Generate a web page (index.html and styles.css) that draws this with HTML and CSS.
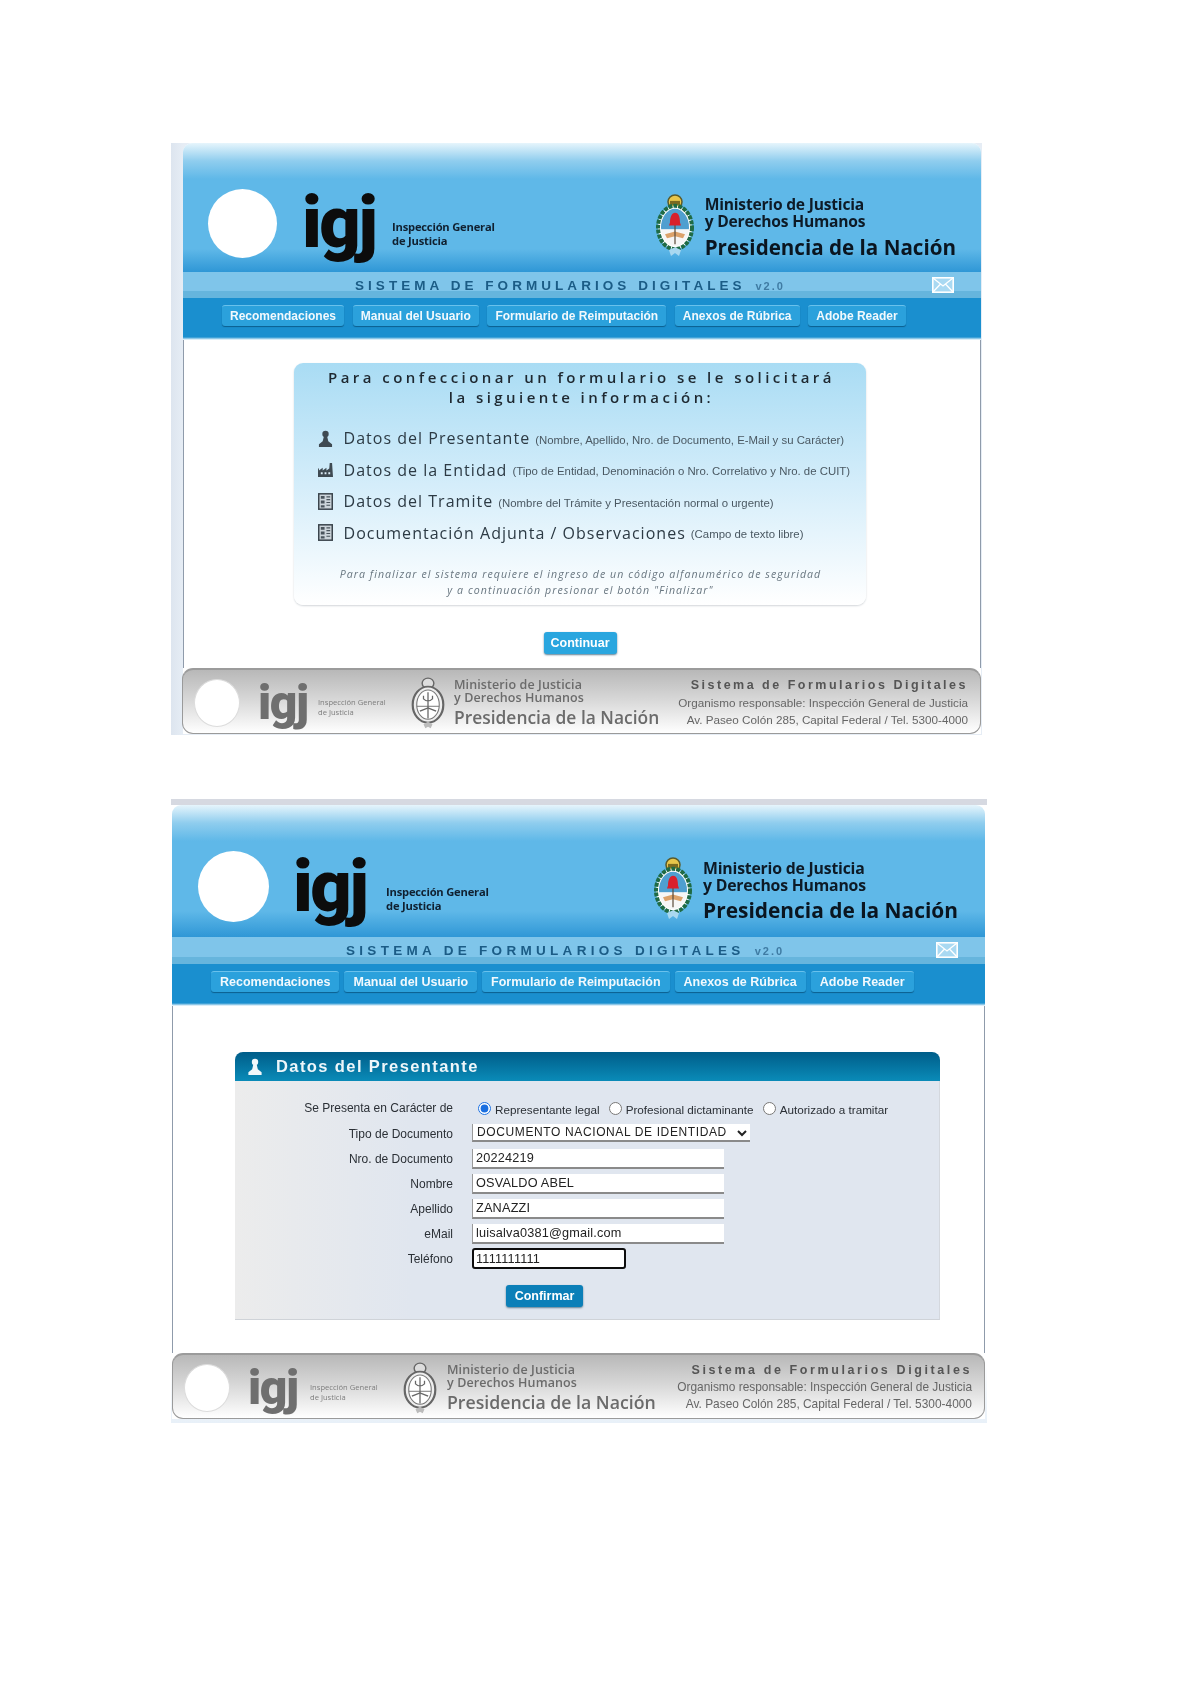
FILE: index.html
```html
<!DOCTYPE html>
<html lang="es">
<head>
<meta charset="utf-8">
<title>Sistema de Formularios Digitales</title>
<link rel="stylesheet" href="styles.css">
</head>
<body>
<svg class="defs" width="0" height="0" aria-hidden="true">
  <defs>
    <clipPath id="shield"><ellipse cx="20" cy="35" rx="14" ry="19"/></clipPath>
    <symbol id="emblem" viewBox="0 0 40 66" preserveAspectRatio="none">
      <circle cx="20" cy="9" r="7" fill="#e8c64a" stroke="#5a5a2a" stroke-width="1.5"/>
      <rect x="15" y="8" width="10" height="4" fill="#7a6a20"/>
      <ellipse cx="20" cy="35" rx="17" ry="22" fill="#fff" stroke="#1f6b45" stroke-width="4" stroke-dasharray="4 1"/>
      <g clip-path="url(#shield)">
        <rect x="4" y="14" width="32" height="23" fill="#4f9fd0"/>
        <rect x="4" y="37" width="32" height="20" fill="#f6f6f6"/>
        <path d="M10 42 L20 39 L30 42 L28 46 L20 44 L12 46Z" fill="#dca26a"/>
        <path d="M20 26 V52" stroke="#5a4a3a" stroke-width="1.2"/>
      </g>
      <path d="M15 30 C15 24 17 20 20 20 C24 20 25 25 25 30 L26 33 H14Z" fill="#d8202c"/>
      <path d="M14 58 L20 55 L26 58 L24 64 L20 61 L16 64Z" fill="#a9d8f0"/>
    </symbol>
    <symbol id="emblem-gray" viewBox="0 0 40 66" preserveAspectRatio="none">
      <circle cx="20" cy="9" r="6.5" fill="#ddd" stroke="#666" stroke-width="1.6"/>
      <ellipse cx="20" cy="35" rx="17" ry="22" fill="#eee" stroke="#666" stroke-width="2.4"/>
      <ellipse cx="20" cy="35" rx="12.5" ry="18" fill="#fff" stroke="#777" stroke-width="1.2"/>
      <path d="M7.5 37 H32.5" stroke="#777" stroke-width="1.2"/>
      <path d="M20 20 V52 M15 24 V28 Q20 33 25 28 V24" fill="none" stroke="#666" stroke-width="1.4"/>
      <path d="M11 43 L20 39 L29 43" fill="none" stroke="#666" stroke-width="1.6"/>
      <path d="M15 59 L20 56 L25 59 L23 64 L20 62 L17 64Z" fill="#bbb"/>
    </symbol>
    <symbol id="person" viewBox="0 0 16 18">
      <circle cx="8" cy="4.2" r="3.4"/>
      <path d="M6.2 7 H9.8 L11 12 L15 15 V18 H1 V15 L5 12Z"/>
    </symbol>
    <symbol id="factory" viewBox="0 0 16 16">
      <path d="M0 16 V7 L1 7 V9 L5 6 V9 L9 6 V9 L12 7 L12.5 1 H15 L16 16Z"/>
      <path d="M3 11 h2 v2 h-2z M7 11 h2 v2 h-2z M11 11 h2 v2 h-2z" fill="#dcecf6"/>
    </symbol>
    <symbol id="doc" viewBox="0 0 16 18">
      <rect x=".8" y=".8" width="14.4" height="16.4" fill="#ccd4da" stroke="#3a444c" stroke-width="1.6"/>
      <path d="M3 3 H7 V6 H3Z M3 8 H7 V11 H3Z M3 13 H7 V15.5 H3Z" fill="#4a545c"/>
      <path d="M9 4 H13 M9 7 H13 M9 10 H13 M9 13 H13" stroke="#4a545c" stroke-width="1.2"/>
    </symbol>
    <symbol id="mail" viewBox="0 0 22 16">
      <rect x=".8" y=".8" width="20.4" height="14.4" fill="#a9d9f2" stroke="#fff" stroke-width="1.6"/>
      <path d="M1 1 L11 9 L21 1 M1 15 L8.5 7 M21 15 L13.5 7" fill="none" stroke="#fff" stroke-width="1.3"/>
    </symbol>
  </defs>
</svg>

<section class="panel panel-first">
  <div class="frame">
    <header class="brand">
      <div class="logo-disc"></div>
      <div class="igj">igj</div>
      <div class="igj-name">Inspección General<br>de Justicia</div>
      <div class="ministry">
        <svg class="emblem"><use href="#emblem"/></svg>
        <div class="ministry-text">
          <div class="ministry-name">Ministerio de Justicia<br>y Derechos Humanos</div>
          <div class="nation">Presidencia de la Nación</div>
        </div>
      </div>
    </header>
    <div class="system-bar">
      <span class="system-title">SISTEMA DE FORMULARIOS DIGITALES <small>v2.0</small></span>
      <svg class="mail"><use href="#mail"/></svg>
    </div>
    <nav class="nav">
      <a class="nav-btn">Recomendaciones</a>
      <a class="nav-btn">Manual del Usuario</a>
      <a class="nav-btn">Formulario de Reimputación</a>
      <a class="nav-btn">Anexos de Rúbrica</a>
      <a class="nav-btn">Adobe Reader</a>
    </nav>
    <main class="content content-info">
      <div class="info-box">
        <h2 class="info-title">Para confeccionar un formulario se le solicitará<br>la siguiente información:</h2>
        <ul class="info-list">
          <li><svg class="info-icon"><use href="#person"/></svg><b>Datos del Presentante</b> <span>(Nombre, Apellido, Nro. de Documento, E-Mail y su Carácter)</span></li>
          <li><svg class="info-icon"><use href="#factory"/></svg><b>Datos de la Entidad</b> <span>(Tipo de Entidad, Denominación o Nro. Correlativo y Nro. de CUIT)</span></li>
          <li><svg class="info-icon"><use href="#doc"/></svg><b>Datos del Tramite</b> <span>(Nombre del Trámite y Presentación normal o urgente)</span></li>
          <li><svg class="info-icon"><use href="#doc"/></svg><b>Documentación Adjunta / Observaciones</b> <span>(Campo de texto libre)</span></li>
        </ul>
        <p class="info-note">Para finalizar el sistema requiere el ingreso de un código alfanumérico de seguridad<br>y a continuación presionar el botón "Finalizar"</p>
      </div>
      <button class="action action-light" type="button">Continuar</button>
    </main>
    <footer class="foot">
      <div class="foot-disc"></div>
      <div class="foot-igj">igj</div>
      <div class="foot-igj-name">Inspección General<br>de Justicia</div>
      <svg class="foot-emblem"><use href="#emblem-gray"/></svg>
      <div class="foot-ministry">
        <div class="foot-ministry-name">Ministerio de Justicia<br>y Derechos Humanos</div>
        <div class="foot-nation">Presidencia de la Nación</div>
      </div>
      <div class="foot-system">
        <div class="foot-system-title">Sistema de Formularios Digitales</div>
        <div>Organismo responsable: Inspección General de Justicia</div>
        <div>Av. Paseo Colón 285, Capital Federal / Tel. 5300-4000</div>
      </div>
    </footer>
  </div>
</section>

<section class="panel panel-second">
  <div class="frame">
    <header class="brand">
      <div class="logo-disc"></div>
      <div class="igj">igj</div>
      <div class="igj-name">Inspección General<br>de Justicia</div>
      <div class="ministry">
        <svg class="emblem"><use href="#emblem"/></svg>
        <div class="ministry-text">
          <div class="ministry-name">Ministerio de Justicia<br>y Derechos Humanos</div>
          <div class="nation">Presidencia de la Nación</div>
        </div>
      </div>
    </header>
    <div class="system-bar">
      <span class="system-title">SISTEMA DE FORMULARIOS DIGITALES <small>v2.0</small></span>
      <svg class="mail"><use href="#mail"/></svg>
    </div>
    <nav class="nav">
      <a class="nav-btn">Recomendaciones</a>
      <a class="nav-btn">Manual del Usuario</a>
      <a class="nav-btn">Formulario de Reimputación</a>
      <a class="nav-btn">Anexos de Rúbrica</a>
      <a class="nav-btn">Adobe Reader</a>
    </nav>
    <main class="content content-form">
      <form class="card">
        <h2 class="card-head"><svg class="card-icon"><use href="#person"/></svg>Datos del Presentante</h2>
        <div class="card-body">
          <div class="form-grid">
            <label class="form-label form-label-top">Se Presenta en Carácter de</label>
            <div class="radios">
              <label class="radio"><input type="radio" name="caracter" checked>Representante legal</label>
              <label class="radio"><input type="radio" name="caracter">Profesional dictaminante</label>
              <label class="radio"><input type="radio" name="caracter">Autorizado a tramitar</label>
            </div>
            <label class="form-label">Tipo de Documento</label>
            <select class="field-select"><option>DOCUMENTO NACIONAL DE IDENTIDAD</option></select>
            <label class="form-label">Nro. de Documento</label>
            <input class="field" type="text" value="20224219">
            <label class="form-label">Nombre</label>
            <input class="field" type="text" value="OSVALDO ABEL">
            <label class="form-label">Apellido</label>
            <input class="field" type="text" value="ZANAZZI">
            <label class="form-label">eMail</label>
            <input class="field" type="text" value="luisalva0381@gmail.com">
            <label class="form-label">Teléfono</label>
            <input class="field field-focus" type="text" value="1111111111">
          </div>
          <button class="action action-dark" type="button">Confirmar</button>
        </div>
      </form>
    </main>
    <footer class="foot">
      <div class="foot-disc"></div>
      <div class="foot-igj">igj</div>
      <div class="foot-igj-name">Inspección General<br>de Justicia</div>
      <svg class="foot-emblem"><use href="#emblem-gray"/></svg>
      <div class="foot-ministry">
        <div class="foot-ministry-name">Ministerio de Justicia<br>y Derechos Humanos</div>
        <div class="foot-nation">Presidencia de la Nación</div>
      </div>
      <div class="foot-system">
        <div class="foot-system-title">Sistema de Formularios Digitales</div>
        <div>Organismo responsable: Inspección General de Justicia</div>
        <div>Av. Paseo Colón 285, Capital Federal / Tel. 5300-4000</div>
      </div>
    </footer>
  </div>
</section>
</body>
</html>
```
FILE: styles.css
```css
* { box-sizing: border-box; }
html, body { margin: 0; height: 100%; overflow: hidden; }
body { background: #fff; padding-top: 143px; font-family: "Liberation Sans", Arial, sans-serif; color: #222; }
.defs { position: absolute; }

.panel { margin-left: 171px; }
.panel-first { width: 811px; padding: 0 0 1px 12px; background: linear-gradient(90deg, #dde5ef 0, #e6edf5 12px, #e6edf5 100%); filter: blur(.75px); }
.panel-second { width: 816px; margin-top: 64px; padding: 6px 2px 4px 1px; background: linear-gradient(180deg, #d6d9e1 0, #d6d9e1 6px, #fff 6px, #fff 90%, #e8f0f8 100%); filter: blur(.6px); }
.panel-first .frame { width: 798px; }
.panel-second .frame { width: 813px; }

.frame { display: flex; flex-direction: column; background: #fff; border-radius: 9px 9px 0 0; }

/* Header */
.brand { display: flex; align-items: center; padding-top: 31px; border-radius: 9px 9px 0 0;
  background: linear-gradient(180deg, #e6f5fc 0, #8fcdee 18px, #5fb8e8 36px, #5fb8e8 106px, #2f97d6 100%); }
.panel-first .brand { height: 129px; padding-left: 25px; padding-right: 25px; }
.panel-second .brand { height: 132px; padding-left: 26px; padding-right: 27px; }
.logo-disc { flex: none; width: 69px; height: 69px; border-radius: 50%; background: #fff; }
.panel-second .logo-disc { width: 71px; height: 71px; }
.igj { flex: none; width: 74px; margin-left: 25px; font: 900 72px/68px Roboto, sans-serif; letter-spacing: -2.5px; color: #0c0c0c; }
.panel-second .igj { margin-left: 24px; }
.igj-name { margin-left: 16px; margin-top: 22px; font: 700 11.2px/14px "Open Sans", sans-serif; letter-spacing: -.2px; color: #102030; white-space: nowrap; }
.panel-second .igj-name { margin-left: 19px; margin-top: 24px; }
.ministry { display: flex; align-items: center; gap: 10px; margin-left: auto; margin-top: 4px; }
.emblem { flex: none; width: 40px; height: 65px; }
.ministry-text { margin-top: 5px; }
.ministry-name { font: 700 15.6px/17px "Open Sans", sans-serif; letter-spacing: -.2px; color: #0d1a26; white-space: nowrap; }
.nation { margin-top: 4.6px; font: 700 20.6px/24px "Open Sans", sans-serif; color: #0a1520; white-space: nowrap; }
.panel-second .ministry-name { font-size: 15.8px; }
.panel-second .nation { font-size: 20.9px; }

.system-bar { position: relative; display: flex; align-items: center; background: linear-gradient(180deg, #7fc5ea 0, #7fc5ea 75%, #66b5dd 75%, #66b5dd 100%); }
.panel-first .system-bar { height: 26px; padding-left: 172px; }
.panel-second .system-bar { height: 27px; padding-left: 174px; }
.system-title { font-weight: 700; font-size: 13.5px; letter-spacing: 4.05px; color: #1b5c86; white-space: nowrap; }
.panel-second .system-title { letter-spacing: 4.3px; }
.system-title small { font-size: 11px; letter-spacing: 2px; color: #3f7ba3; margin-left: 2px; }
.mail { position: absolute; top: 5px; right: 27px; width: 22px; height: 16px; }

.nav { display: flex; height: 42px; padding-top: 7px; background: linear-gradient(180deg, #1a8fcf 0, #1a8fcf 39px, #fff 42px); }
.panel-first .nav { padding-left: 39px; gap: 8.7px; }
.panel-second .nav { padding-left: 39px; gap: 5px; }
.nav-btn { display: flex; align-items: center; height: 21px; border-radius: 3px; border-top: 1px solid #69c1ec; background: #2ba1dc; box-shadow: 0 1px 1px #0c5f8e; color: #f2f9fd; font-weight: 700; white-space: nowrap; }
.panel-first .nav-btn { padding: 0 8px; font-size: 12px; }
.panel-second .nav-btn { padding: 0 9px; font-size: 12.5px; }

/* Main */
.content { flex: none; background: #fff; border-left: 1.5px solid #8f9bab; border-right: 1.5px solid #8f9bab; }
.content-info { display: flex; flex-direction: column; align-items: center; height: 328px; padding-top: 23px; }
.content-form { height: 347px; padding: 46px 0 0 62px; }

.info-box { width: 572px; height: 242px; margin-right: 5px; padding: 4px 12px 0 24px; border-radius: 9px; background: linear-gradient(180deg, #a9dcf4 0, #d4edfa 50%, #fff 100%); box-shadow: 0 1px 2px #d2d6da; font-family: "Open Sans", sans-serif; }
.info-title { margin: 0 0 0 -8px; text-align: center; font-size: 15px; line-height: 20px; font-weight: 600; letter-spacing: 3.45px; color: #1e2830; }
.info-list { list-style: none; margin: 20px 0 0 0; padding: 0; display: flex; flex-direction: column; gap: 9.5px; }
.info-list li { display: flex; align-items: center; height: 22px; white-space: nowrap; }
.info-list b { font-size: 16px; font-weight: 400; letter-spacing: 1.02px; color: #2c3a44; margin-right: 5px; }
.info-list span { font-family: "Liberation Sans", Arial, sans-serif; font-size: 11.4px; color: #4a5862; margin-top: 3px; }
.info-icon { flex: none; width: 15px; height: 17px; margin-right: 11px; fill: #3f4a52; }
.info-note { margin: 22px 0 0 -10px; text-align: center; font-style: italic; font-size: 10.6px; line-height: 16px; letter-spacing: 1.05px; color: #687680; }

.action { display: block; height: 22px; padding: 0; border: 0; border-radius: 3px; color: #fff; font: 700 12.5px "Liberation Sans", Arial, sans-serif; box-shadow: 0 1px 2px #5d7f93; }
.action-light { width: 73px; margin-top: 27px; margin-right: 4px; background: #2aa6df; }
.action-dark { width: 77px; margin: 16px 0 0 271px; background: #0b7fb8; }

/* Card */
.card { width: 705px; }
.card-head { display: flex; align-items: center; height: 29px; margin: 0; padding-left: 12px; border-radius: 8px 8px 0 0; background: linear-gradient(180deg, #005d89 0, #0a8bb8 100%); color: #eef6fa; font-size: 16.5px; font-weight: 700; letter-spacing: 1.4px; }
.card-icon { width: 16px; height: 17px; margin-right: 13px; fill: #f2f7fa; }
.card-body { height: 239px; padding-top: 18px; background: linear-gradient(90deg, #ececec 0, #e0e6ef 25%, #e0e6ef 100%); border-bottom: 1px solid #cfd3d8; border-right: 1px solid #d4d8de; }
.form-grid { display: grid; grid-template-columns: 218px 1fr; column-gap: 19px; row-gap: 5px; }
.form-label { display: flex; align-items: center; justify-content: flex-end; height: 20px; font-size: 12px; color: #2b3036; }
.form-label-top { height: 17px; }
.radios { display: flex; align-items: center; height: 20px; margin-left: 6px; gap: 9px; }
.radio { display: flex; align-items: center; gap: 4px; font-size: 11.7px; color: #2b3036; white-space: nowrap; }
.radio input { width: 13px; height: 13px; margin: 0 0 2px; accent-color: #1a6fe0; }
.field-select { width: 278px; height: 18px; padding: 0; border: 0; border-left: 1px solid #999; border-bottom: 2px solid #8a8a8a; background: #fff; font: 12px "Liberation Sans", Arial, sans-serif; letter-spacing: .62px; color: #222; }
.field { width: 252px; height: 20px; padding: 0 3px; border: 0; border-left: 1px solid #999; border-bottom: 2px solid #8a8a8a; background: #fff; font: 12.7px "Liberation Sans", Arial, sans-serif; color: #222; letter-spacing: .2px; }
.field-focus { width: 154px; height: 21px; margin-top: -1px; border: 2px solid #0d0d0d; border-radius: 3px; padding: 0 2px; }

/* Footer */
.foot { display: flex; align-items: center; height: 66px; padding: 2px 12px 0 11px; border: 1px solid #9a9a9a; border-top: 2px solid #9b9b9b; border-radius: 11px; background: linear-gradient(180deg, #b8b8b8 0, #d6d6d6 45%, #fff 100%); }
.panel-first .foot { margin-left: -1px; }
.foot-disc { flex: none; width: 46px; height: 48px; border-radius: 50%; background: #fff; border: 1px solid #dcdcdc; }
.foot-igj { flex: none; width: 50px; margin-left: 18px; font: 900 48px/46px Roboto, sans-serif; letter-spacing: -1.4px; color: #6f6f6f; }
.foot-igj-name { width: 72px; margin-left: 10px; margin-top: 8px; font: 400 7.6px/10px "Open Sans", sans-serif; color: #7d7d7d; white-space: nowrap; }
.panel-second .foot-igj-name { margin-left: 12px; }
.foot-emblem { flex: none; width: 36px; height: 54px; margin-left: 20px; }
.foot-ministry { margin-left: 8px; color: #6b6b6b; white-space: nowrap; }
.panel-second .foot-ministry { margin-left: 9px; }
.foot-ministry-name { font: 600 12.5px/13px "Open Sans", sans-serif; letter-spacing: .1px; }
.foot-nation { margin-top: 4.6px; font: 600 17.4px/19px "Open Sans", sans-serif; }
.panel-second .foot-nation { font-size: 17.7px; }
.foot-system { margin-left: auto; text-align: right; font-size: 11.7px; line-height: 17px; color: #666; white-space: nowrap; }
.panel-second .foot-system { font-size: 11.9px; }
.foot-system-title { font-size: 12.5px; font-weight: 700; letter-spacing: 2.5px; color: #555; }
.panel-second .foot-system-title { letter-spacing: 2.6px; }
```
